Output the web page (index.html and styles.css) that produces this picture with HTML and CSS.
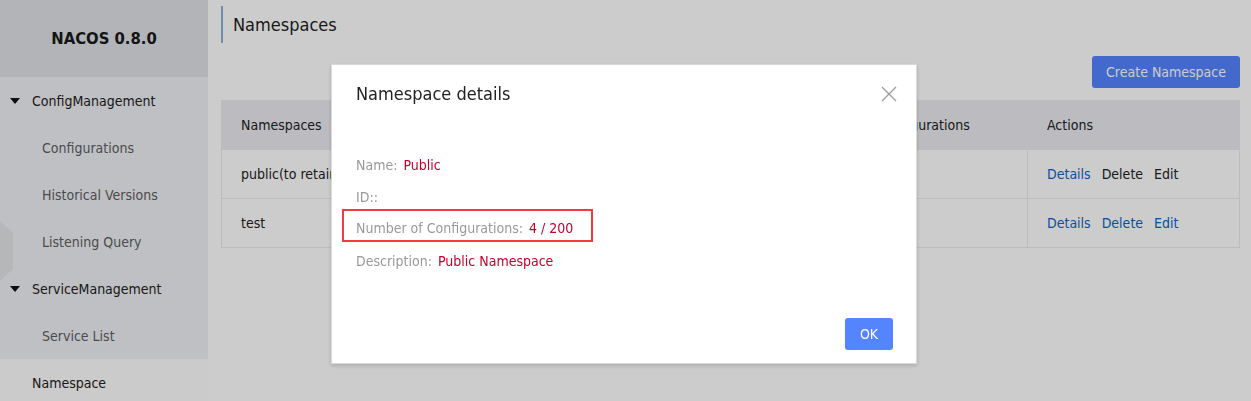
FILE: index.html
```html
<!DOCTYPE html>
<html>
<head>
<meta charset="utf-8">
<title>Nacos - Namespaces</title>
<link rel="stylesheet" href="styles.css">
</head>
<body>
<div class="app">
  <aside class="sidebar">
    <div class="brand">NACOS 0.8.0</div>
    <ul class="menu">
      <li class="group"><span class="caret"></span>ConfigManagement</li>
      <li class="sub">Configurations</li>
      <li class="sub">Historical Versions</li>
      <li class="sub">Listening Query</li>
      <li class="group"><span class="caret"></span>ServiceManagement</li>
      <li class="sub">Service List</li>
      <li class="top active">Namespace</li>
    </ul>
    <svg class="hexagon" width="14" height="64" viewBox="0 0 14 64"><polygon points="0,0 13,12 13,48 0,60" fill="#e3e5e8"/></svg>
  </aside>
  <main class="main">
    <div class="page-title">Namespaces</div>
    <div class="toolbar"><button class="btn-primary">Create Namespace</button></div>
    <table class="grid">
      <thead>
        <tr><th class="c1">Namespaces</th><th class="c2">Namespace ID</th><th class="c3">Number of Configurations</th><th class="c4">Actions</th></tr>
      </thead>
      <tbody>
        <tr><td>public(to retain</td><td></td><td></td><td><span class="act link">Details</span><span class="act">Delete</span><span class="act">Edit</span></td></tr>
        <tr><td>test</td><td></td><td></td><td><span class="act link">Details</span><span class="act link">Delete</span><span class="act link">Edit</span></td></tr>
      </tbody>
    </table>
  </main>
</div>
<div class="mask"></div>
<div class="dialog">
  <div class="dialog-head">
    <span class="dialog-title">Namespace details</span>
    <svg class="close" width="16" height="16" viewBox="0 0 16 16"><path d="M1 1 L15 15 M15 1 L1 15" stroke="#999" stroke-width="1.2" fill="none"/></svg>
  </div>
  <div class="dialog-body">
    <div class="line"><span class="label">Name:</span><span class="value">Public</span></div>
    <div class="line"><span class="label">ID::</span></div>
    <div class="line"><div class="mark"><span class="label">Number of Configurations:</span><span class="value">4 / 200</span></div></div>
    <div class="line"><span class="label">Description:</span><span class="value">Public Namespace</span></div>
  </div>
  <div class="dialog-foot"><button class="btn-ok">OK</button></div>
</div>
</body>
</html>
```
FILE: styles.css
```css
html, body {
  margin: 0;
  padding: 0;
  height: 100%;
  overflow: hidden;
}
body {
  font-family: "DejaVu Sans Condensed", "DejaVu Sans", sans-serif;
  font-size: 14px;
  color: #333;
  background: #fff;
}
.app {
  display: flex;
  height: 401px;
}
.sidebar {
  position: relative;
  width: 208px;
  flex: none;
  background: #eff1f5;
}
.brand {
  height: 77px;
  background: #e0e2e6;
  display: flex;
  align-items: center;
  justify-content: center;
  font-weight: bold;
  font-size: 16.5px;
  color: #1a1a1a;
}
.menu {
  list-style: none;
  margin: 0;
  padding: 0;
}
.menu li {
  height: 47px;
  display: flex;
  align-items: center;
}
.menu .group {
  padding-left: 10px;
  color: #222;
}
.caret {
  width: 0;
  height: 0;
  border-left: 5px solid transparent;
  border-right: 5px solid transparent;
  border-top: 6px solid #111;
  margin-right: 12px;
}
.menu .sub {
  padding-left: 42px;
  color: #5e5e5e;
}
.menu .top {
  padding-left: 32px;
  color: #222;
}
.menu .active {
  background: #fefefe;
}
.hexagon {
  position: absolute;
  left: 0;
  top: 221px;
}
.main {
  flex: 1;
  padding: 6px 11px 0 13px;
}
.page-title {
  border-left: 2px solid #86b2e0;
  height: 37px;
  padding-left: 10px;
  display: flex;
  align-items: center;
  font-size: 18px;
  color: #1f1f1f;
}
.toolbar {
  display: flex;
  justify-content: flex-end;
  margin-top: 13px;
}
.btn-primary {
  height: 32px;
  padding: 0 14px;
  background: #5584ff;
  color: #fff;
  border: none;
  border-radius: 3px;
  font-family: inherit;
  font-size: 14px;
}
.grid {
  margin-top: 12px;
  width: 100%;
  border-collapse: collapse;
  table-layout: fixed;
}
.grid th, .grid td {
  box-sizing: border-box;
  height: 49px;
  padding: 0 0 0 19px;
  text-align: left;
  border: 1px solid #ececec;
  font-weight: normal;
  color: #222;
  white-space: nowrap;
  overflow: hidden;
}
.grid th {
  background: #ebebf0;
}
.c1 { width: 300px; }
.c2 { width: 266px; }
.c3 { width: 240px; }
.act {
  margin-right: 11px;
  color: #222;
}
.act.link {
  color: #0d63c9;
}
.mask {
  position: fixed;
  inset: 0;
  background: rgba(0, 0, 0, 0.2);
}
.dialog {
  position: fixed;
  left: 331px;
  top: 64px;
  width: 586px;
  height: 300px;
  box-sizing: border-box;
  background: #fff;
  border: 1px solid #d8d8d8;
  box-shadow: 0 2px 4px rgba(0, 0, 0, 0.15);
  display: flex;
  flex-direction: column;
}
.dialog-head {
  display: flex;
  justify-content: space-between;
  align-items: center;
  padding: 17px 19px 0 24px;
  height: 23px;
}
.dialog-title {
  font-size: 18px;
  color: #222;
}
.close {
  margin-top: 1px;
}
.dialog-body {
  padding: 44px 24px 0 24px;
  flex: 1;
}
.line {
  height: 32px;
  display: flex;
  align-items: center;
}
.label {
  color: #999;
}
.value {
  color: #c3002e;
  margin-left: 6px;
}
.mark {
  box-sizing: border-box;
  display: flex;
  align-items: center;
  margin-left: -14px;
  margin-top: -7px;
  padding: 4px 18px 0 12px;
  height: 33px;
  border: 2px solid #f03c3c;
}
.dialog-foot {
  display: flex;
  justify-content: flex-end;
  padding: 0 23px 13px 0;
}
.btn-ok {
  width: 48px;
  height: 32px;
  background: #5584ff;
  color: #fff;
  border: none;
  border-radius: 3px;
  font-family: inherit;
  font-size: 14px;
}
```
